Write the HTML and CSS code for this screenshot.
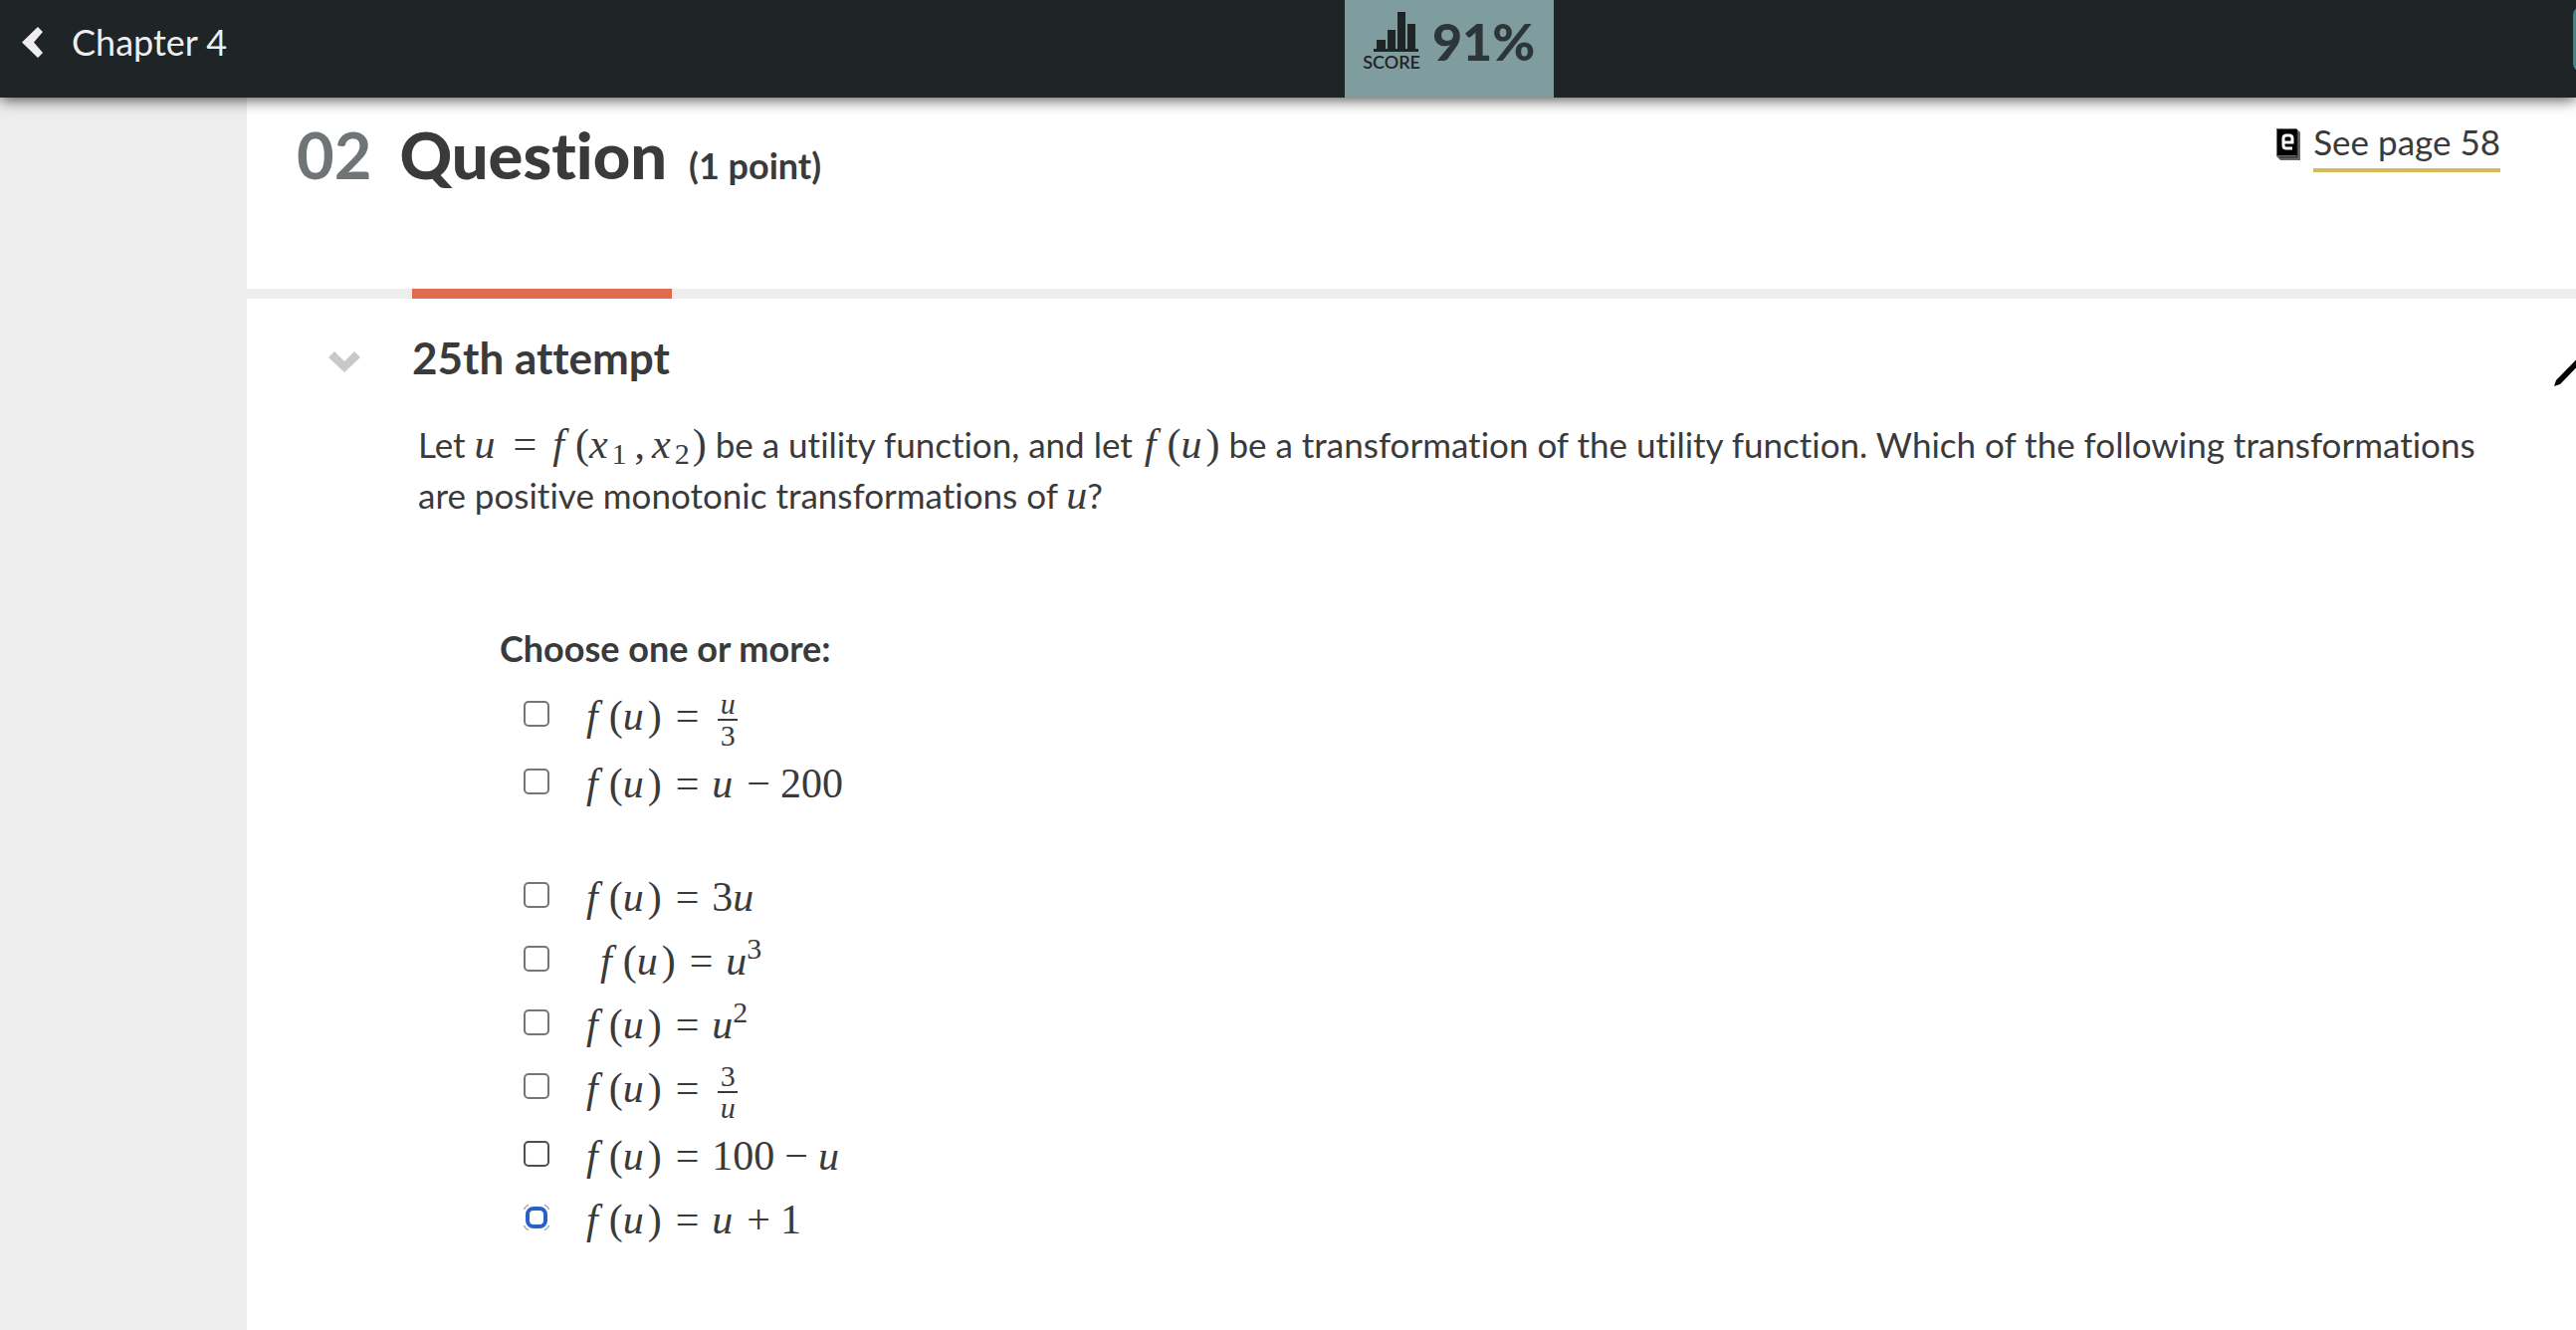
FILE: index.html
```
<!DOCTYPE html>
<html lang="en">
<head>
    <meta charset="UTF-8">
    <meta name="viewport" content="width=device-width, initial-scale=1.0">
    <title>Chapter 4 - Question 02</title>
    <link rel="stylesheet" href="styles.css">
</head>
<body>
    <!-- Top Bar -->
    <header class="topbar">
        <a href="#" class="back-link">
            <svg class="back-icon" viewBox="0 0 21 31" aria-hidden="true"><path d="M16 0 L21 5 L12 15.5 L21 26 L16 31 L0 15.5 Z"/></svg>
            <span>Chapter 4</span>
        </a>
        <div class="score">
            <div class="score-label">
                <svg class="score-icon" viewBox="0 0 45 40" aria-hidden="true"><path d="M0 37h3v-9h9v9h2V18h8v19h2V0h8v37h2V12h8v25h3v3H0z"/></svg>
                <span>SCORE</span>
            </div>
            <div class="score-value">91%</div>
        </div>
        <button type="button" class="submit-btn" aria-label="Submit"></button>
    </header>

    <div class="page">
        <aside class="sidebar"></aside>

        <main class="content">
            <!-- Question Header -->
            <div class="question-header">
                <h1 class="question-title">
                    <span class="question-number">02</span>
                    <span class="question-name">Question</span>
                    <span class="question-points">(1 point)</span>
                </h1>
                <div class="page-ref">
                    <svg class="book-icon" viewBox="0 0 24 32" aria-hidden="true">
                        <path d="M0 0h20l4 4v28H4l-4-4z" fill="#666"/>
                        <path d="M1 1h20v26H1z" fill="#000"/>
                        <path d="M3 29h18V4" fill="none" stroke="#222"/>
                        <path d="M7 14h9v-4q0-3-3-3h-3Q7 7 7 10v7q0 3 3 3h6" fill="none" stroke="#fff" stroke-width="3"/>
                    </svg>
                    <a href="#" class="page-link">See page 58</a>
                </div>
            </div>
            <div class="divider"><div class="divider-active"></div></div>

            <!-- Attempt -->
            <section class="attempt">
                <div class="attempt-header">
                    <button type="button" class="toggle-btn" aria-label="Collapse attempt">
                        <svg class="toggle-icon" viewBox="0 0 32 21" aria-hidden="true"><path d="M0 6 L6 0 L16 10 L26 0 L32 6 L16 21 Z"/></svg>
                    </button>
                    <h2 class="attempt-title">25th attempt</h2>
                    <svg class="pencil-icon" viewBox="0 0 44 58" aria-hidden="true"><path d="M0 58 L2 52 L40 13 L44 17 L6 56 Z"/></svg>
                </div>

                <p class="prompt">Let <span class="math"><i>u</i><b class="eq">=</b><i class="fn">f</i>(<i>x</i><sub>1</sub><b class="comma">,</b><i>x</i><sub>2</sub>)</span> be a utility function, and let <span class="math"><i class="fn">f</i>(<i>u</i>)</span> be a transformation of the utility function. Which of the following transformations are positive monotonic transformations of <span class="math"><i class="last">u</i></span>?</p>

                <fieldset class="choices">
                    <legend>Choose one or more:</legend>
                    <label class="choice has-frac">
                        <input type="checkbox">
                        <span class="math"><i class="fn">f</i>(<i>u</i>)<b class="eq">=</b><span class="frac"><span><i>u</i></span><span>3</span></span></span>
                    </label>
                    <label class="choice spaced">
                        <input type="checkbox">
                        <span class="math"><i class="fn">f</i>(<i>u</i>)<b class="eq">=</b><i>u</i><b class="op">−</b>200</span>
                    </label>
                    <label class="choice">
                        <input type="checkbox">
                        <span class="math"><i class="fn">f</i>(<i>u</i>)<b class="eq">=</b>3<i>u</i></span>
                    </label>
                    <label class="choice indented">
                        <input type="checkbox">
                        <span class="math"><i class="fn">f</i>(<i>u</i>)<b class="eq">=</b><i class="last">u</i><sup>3</sup></span>
                    </label>
                    <label class="choice">
                        <input type="checkbox">
                        <span class="math"><i class="fn">f</i>(<i>u</i>)<b class="eq">=</b><i class="last">u</i><sup>2</sup></span>
                    </label>
                    <label class="choice has-frac">
                        <input type="checkbox">
                        <span class="math"><i class="fn">f</i>(<i>u</i>)<b class="eq">=</b><span class="frac"><span>3</span><span><i>u</i></span></span></span>
                    </label>
                    <label class="choice">
                        <input type="checkbox" class="hovered">
                        <span class="math"><i class="fn">f</i>(<i>u</i>)<b class="eq">=</b>100<b class="op">−</b><i>u</i></span>
                    </label>
                    <label class="choice">
                        <input type="checkbox" class="active">
                        <span class="math"><i class="fn">f</i>(<i>u</i>)<b class="eq">=</b><i>u</i><b class="op">+</b>1</span>
                    </label>
                </fieldset>
            </section>
        </main>
    </div>
</body>
</html>
```
FILE: styles.css
```
* {
    margin: 0;
    padding: 0;
    box-sizing: border-box;
}

body {
    min-height: 100vh;
    display: flex;
    flex-direction: column;
    overflow-x: hidden;
    background-color: #fff;
    color: #3a3a3a;
    font-family: Lato, sans-serif;
    font-size: 36px;
    font-variant-ligatures: none;
}

/* Top bar */
.topbar {
    position: relative;
    z-index: 1;
    height: 98px;
    display: grid;
    grid-template-columns: 568fr 210px 432fr;
    background-color: #1f2426;
    box-shadow: 0 2px 14px rgba(0, 0, 0, 0.7);
}

.back-link {
    display: flex;
    align-items: center;
    align-self: start;
    gap: 29px;
    padding: 18px 22px;
    line-height: 48px;
    color: #eee;
    text-decoration: none;
}

.back-icon {
    width: 21px;
    height: 31px;
    fill: #eee;
}

.score {
    display: flex;
    justify-content: center;
    gap: 12px;
    background-color: #7f9c9f;
    color: #2c3638;
}

.score-label {
    display: flex;
    flex-direction: column;
    align-items: flex-end;
    padding-top: 12px;
    color: #1f2426;
    font-size: 18px;
    font-weight: 600;
    line-height: 20px;
}

.score-icon {
    width: 45px;
    height: 40px;
    margin-right: 2px;
    fill: #1f2426;
}

.score-value {
    font-size: 52px;
    font-weight: 900;
    line-height: 83px;
}

.submit-btn {
    justify-self: end;
    width: 120px;
    height: 65px;
    margin-top: 7px;
    margin-right: -117px;
    border: 2px solid #3d8588;
    border-radius: 8px;
    background-color: #3d8588;
}

/* Page */
.page {
    flex: 1;
    display: flex;
}

.sidebar {
    width: 248px;
    flex-shrink: 0;
    background-color: #ededed;
}

.content {
    flex: 1;
    min-width: 0;
}

.question-header {
    display: flex;
    justify-content: space-between;
    align-items: flex-start;
    height: 192px;
    padding: 17px 76px 0 50px;
}

.question-title {
    display: flex;
    align-items: baseline;
    font-size: 65px;
    line-height: 80px;
}

.question-number {
    margin-right: 28px;
    color: #6f7476;
}

.question-name {
    margin-right: 22px;
    font-weight: 900;
}

.question-points {
    font-size: 36px;
}

.page-ref {
    display: flex;
    align-items: flex-start;
    gap: 13px;
}

.book-icon {
    width: 24px;
    height: 32px;
    margin-top: 14px;
}

.page-link {
    border-bottom: 4px solid #d5bb58;
    color: #3a3a3a;
    font-size: 35px;
    line-height: 54px;
    text-decoration: none;
}

.divider {
    height: 10px;
    padding-left: 166px;
    background-color: #ededed;
}

.divider-active {
    width: 261px;
    height: 10px;
    background-color: #df6c4c;
}

/* Attempt */
.attempt {
    padding: 30px 76px 60px 166px;
}

.attempt-header {
    display: flex;
    align-items: center;
    margin-left: -84px;
    margin-right: -98px;
}

.toggle-btn {
    display: flex;
    width: 84px;
    padding-top: 8px;
    border: none;
    background: none;
    cursor: pointer;
}

.toggle-icon {
    width: 32px;
    height: 21px;
    fill: #c8c8c8;
}

.attempt-title {
    flex: 1;
    font-size: 44px;
    line-height: 58px;
}

.pencil-icon {
    width: 44px;
    height: 58px;
}

.prompt {
    margin-top: 33px;
    padding-left: 6px;
    font-size: 35px;
    line-height: 51px;
}

/* Formulas */
.math {
    font-family: "Liberation Serif", serif;
    font-size: 42px;
    line-height: 1;
    white-space: nowrap;
}

.prompt .math {
    line-height: 0;
}

.math i {
    margin-right: 4px;
}

.math .fn {
    margin-left: 3px;
    margin-right: 11px;
}

.math .last {
    margin-right: 0;
}

.math b {
    font-weight: normal;
}

.math .eq {
    margin: 0 13px 0 14px;
}

.math .op {
    margin: 0 10px;
}

.math .comma {
    margin: 0 7px 0 5px;
}

.math sub,
.math sup {
    font-size: 30px;
    line-height: 0;
}

.math sub {
    margin-right: 3px;
    vertical-align: -6px;
}

.math sup {
    vertical-align: 16px;
}

.frac {
    display: inline-flex;
    flex-direction: column;
    margin-left: 6px;
    font-size: 30px;
    text-align: center;
    vertical-align: middle;
}

.frac i {
    margin-right: 0;
}

.frac span {
    min-width: 20px;
}

.frac span:first-child {
    border-bottom: 2px solid #3a3a3a;
}

/* Choices */
.choices {
    margin-top: 104px;
    padding-left: 88px;
    border: none;
}

.choices legend {
    margin-bottom: 12px;
    font-weight: bold;
    line-height: 48px;
}

.choice {
    display: flex;
    align-items: flex-start;
    height: 64px;
    padding-left: 24px;
}

.choice .math {
    line-height: 64px;
}

.choice .frac {
    line-height: 30px;
}

.choice input {
    appearance: none;
    position: relative;
    flex-shrink: 0;
    width: 26px;
    height: 26px;
    margin-top: 17px;
    margin-right: 34px;
    border: 2px solid #767676;
    border-radius: 5px;
    background-color: #fff;
}

.choice .hovered {
    border-color: #4f4f4f;
}

/* pressed state: blue ring, only the corners of the box stay visible */
.choice .active {
    border-width: 1px;
    border-radius: 6px;
}

.choice .active::before {
    content: "";
    position: absolute;
    inset: -1px;
    background:
        linear-gradient(#fff, #fff) center / 16px 100% no-repeat,
        linear-gradient(#fff, #fff) center / 100% 16px no-repeat;
}

.choice .active::after {
    content: "";
    position: absolute;
    inset: 1px;
    border: 4px solid #2860c8;
    border-radius: 8px;
}

.has-frac {
    height: 68px;
}

.spaced {
    margin-bottom: 50px;
}

.indented .math {
    padding-left: 14px;
}
```
